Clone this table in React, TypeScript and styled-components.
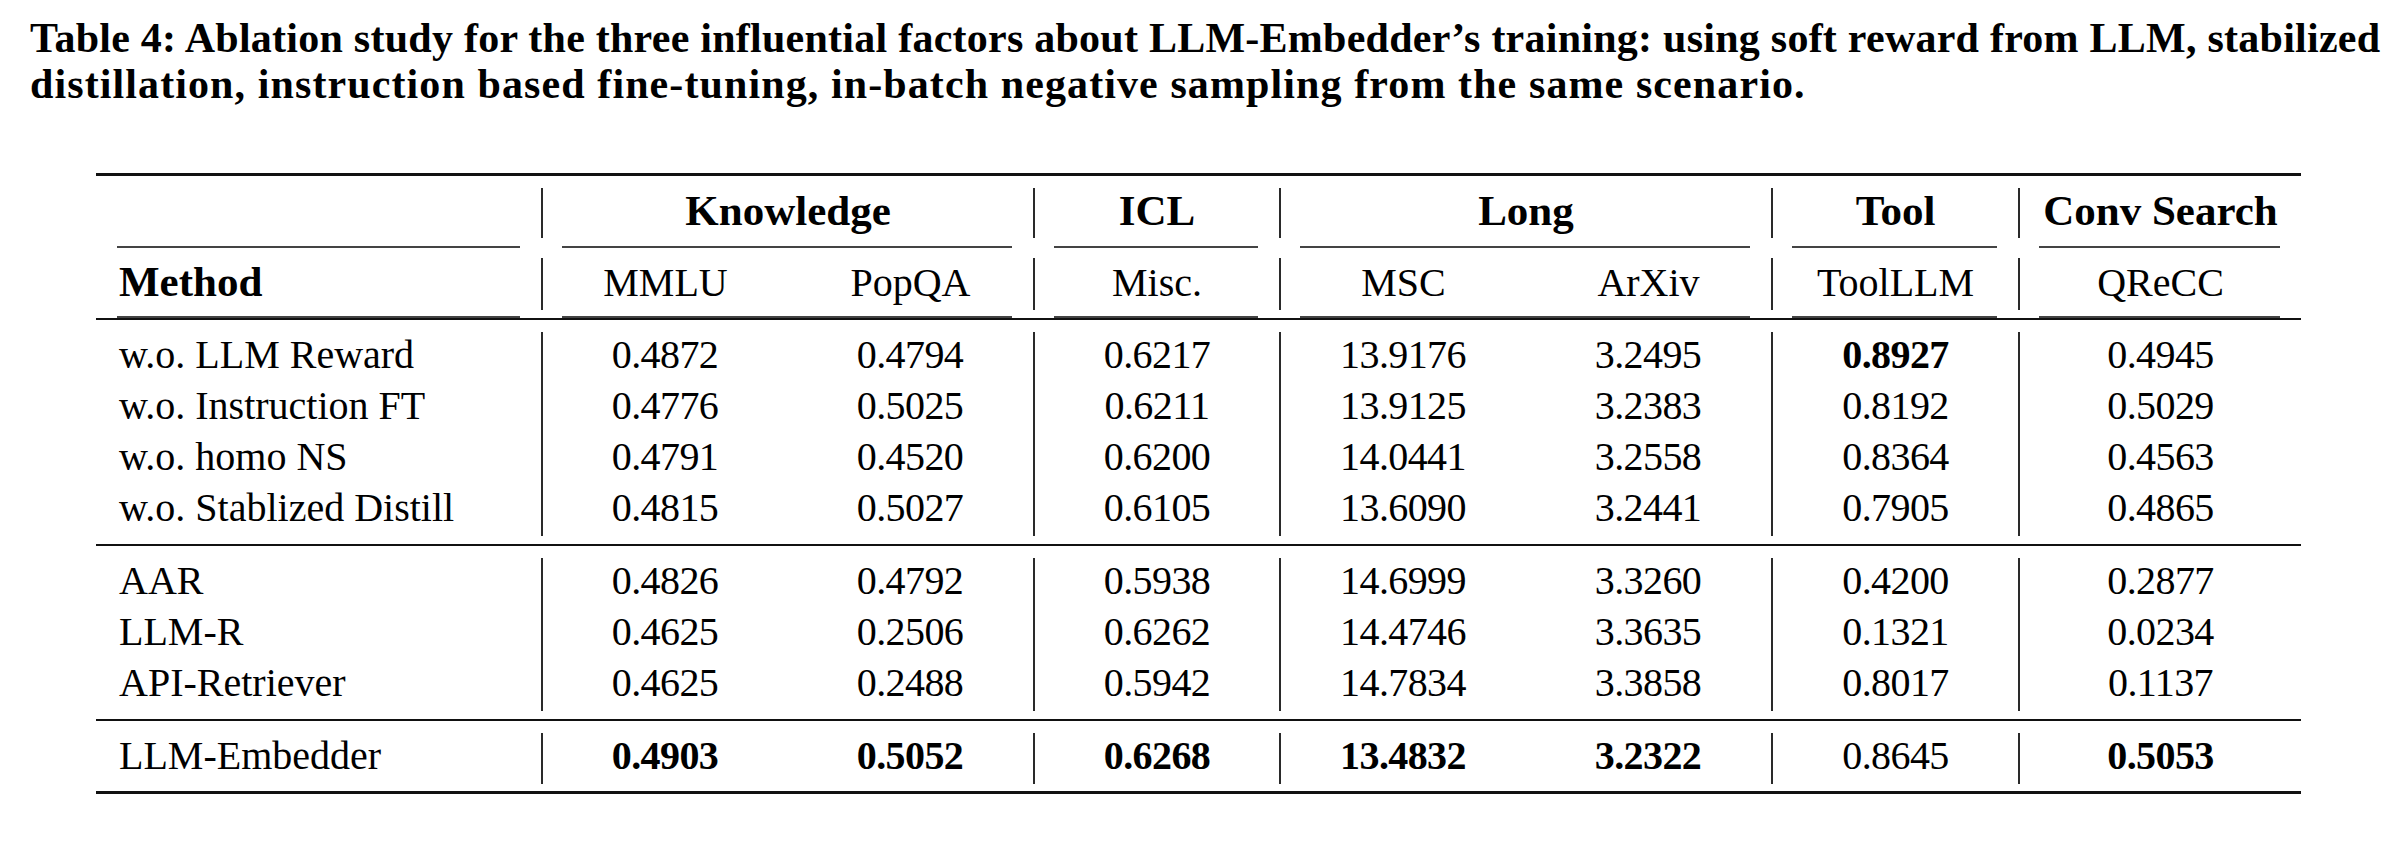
import { createGlobalStyle, styled } from "styled-components";

type Group = {
    title: string;
    subs: string[];
};

type Row = {
    method: string;
    values: string[];
    bold: number[];
};

const groups: Group[] = [
    { title: "Knowledge", subs: ["MMLU", "PopQA"] },
    { title: "ICL", subs: ["Misc."] },
    { title: "Long", subs: ["MSC", "ArXiv"] },
    { title: "Tool", subs: ["ToolLLM"] },
    { title: "Conv Search", subs: ["QReCC"] },
];

const blocks: Row[][] = [
    [
        { method: "w.o. LLM Reward", values: ["0.4872", "0.4794", "0.6217", "13.9176", "3.2495", "0.8927", "0.4945"], bold: [5] },
        { method: "w.o. Instruction FT", values: ["0.4776", "0.5025", "0.6211", "13.9125", "3.2383", "0.8192", "0.5029"], bold: [] },
        { method: "w.o. homo NS", values: ["0.4791", "0.4520", "0.6200", "14.0441", "3.2558", "0.8364", "0.4563"], bold: [] },
        { method: "w.o. Stablized Distill", values: ["0.4815", "0.5027", "0.6105", "13.6090", "3.2441", "0.7905", "0.4865"], bold: [] },
    ],
    [
        { method: "AAR", values: ["0.4826", "0.4792", "0.5938", "14.6999", "3.3260", "0.4200", "0.2877"], bold: [] },
        { method: "LLM-R", values: ["0.4625", "0.2506", "0.6262", "14.4746", "3.3635", "0.1321", "0.0234"], bold: [] },
        { method: "API-Retriever", values: ["0.4625", "0.2488", "0.5942", "14.7834", "3.3858", "0.8017", "0.1137"], bold: [] },
    ],
    [
        { method: "LLM-Embedder", values: ["0.4903", "0.5052", "0.6268", "13.4832", "3.2322", "0.8645", "0.5053"], bold: [0, 1, 2, 3, 4, 6] },
    ],
];

// value columns that start a new group get the vertical line
const sepCols = [0, 2, 3, 5, 6];

const App = () => {
    return (
        <>
            <GlobalStyle />
            <Caption>
                <CaptionLine $spacing={0.25}>
                    Table 4: Ablation study for the three influential factors about LLM-Embedder’s training: using soft reward from LLM, stabilized
                </CaptionLine>
                <CaptionLine $spacing={1.1}>
                    distillation, instruction based fine-tuning, in-batch negative sampling from the same scenario.
                </CaptionLine>
            </Caption>

            <Table>
                <HeadBand>
                    <GroupCell>
                        <TopLabel />
                        <CRule />
                    </GroupCell>
                    {groups.map((g) => (
                        <GroupCell key={g.title}>
                            <TopLabel $sep>{g.title}</TopLabel>
                            <CRule />
                        </GroupCell>
                    ))}
                </HeadBand>

                <HeadBand>
                    <GroupCell>
                        <SubLabel>
                            <MethodHead>Method</MethodHead>
                        </SubLabel>
                        <CRule $gap={6} />
                    </GroupCell>
                    {groups.map((g) => (
                        <GroupCell key={g.title}>
                            <SubLabel $sep>
                                {g.subs.map((s) => (
                                    <SubName key={s}>{s}</SubName>
                                ))}
                            </SubLabel>
                            <CRule $gap={6} />
                        </GroupCell>
                    ))}
                </HeadBand>

                {blocks.map((rows, bi) => (
                    <Block key={bi} $last={bi === blocks.length - 1}>
                        {rows.map((row) => (
                            <Line key={row.method}>
                                <MethodCell>{row.method}</MethodCell>
                                {row.values.map((v, i) => (
                                    <ValueCell
                                        key={i}
                                        $sep={sepCols.includes(i)}
                                        $bold={row.bold.includes(i)}
                                    >
                                        {v}
                                    </ValueCell>
                                ))}
                            </Line>
                        ))}
                    </Block>
                ))}
            </Table>
        </>
    );
};

const GlobalStyle = createGlobalStyle`
    * {
        box-sizing: border-box;
    }
    html, body {
        margin: 0;
        padding: 0;
        background: #ffffff;
        color: #000000;
        font-family: "Liberation Serif", "Times New Roman", serif;
    }
`;

const Caption = styled.div`
    padding: 15px 0 0 30px;
    font-size: 42px;
    font-weight: 700;
    line-height: 46px;
`;

const CaptionLine = styled.span<{ $spacing: number }>`
    display: block;
    white-space: nowrap;
    letter-spacing: ${(p) => p.$spacing}px;
`;

const Table = styled.div`
    width: 2205px;
    margin: 66px 0 0 96px;
    border-top: 3px solid #111;
    border-bottom: 3px solid #111;
`;

const HeadBand = styled.div`
    display: grid;
    grid-template-columns: 445px 492px 246px 492px 247px 283px;
`;

const GroupCell = styled.div`
    display: flex;
    flex-direction: column;
`;

const TopLabel = styled.div<{ $sep?: boolean }>`
    height: 50px;
    margin-top: 12px;
    padding-bottom: 5px;
    border-left: ${(p) => (p.$sep ? "2px solid #2a2a2a" : "none")};
    font-size: 43px;
    font-weight: 700;
    line-height: 45px;
    text-align: center;
    white-space: nowrap;
`;

const CRule = styled.div<{ $gap?: number }>`
    margin: ${(p) => p.$gap ?? 8}px 21px 0;
    border-top: 2px solid #444;
`;

const SubLabel = styled.div<{ $sep?: boolean }>`
    display: flex;
    height: 52px;
    margin-top: 10px;
    border-left: ${(p) => (p.$sep ? "2px solid #2a2a2a" : "none")};
`;

const MethodHead = styled.div`
    padding-left: 23px;
    font-size: 43px;
    font-weight: 700;
    line-height: 47px;
`;

const SubName = styled.div`
    flex: 1;
    font-size: 40px;
    line-height: 49px;
    text-align: center;
    white-space: nowrap;
`;

const Block = styled.div<{ $last: boolean }>`
    padding: 12px 0 ${(p) => (p.$last ? 7 : 8)}px;
    border-top: 2px solid #111;
`;

const Line = styled.div`
    display: grid;
    grid-template-columns: 445px 246px 246px 246px 246px 246px 247px 283px;
    height: 51px;
`;

const MethodCell = styled.div`
    padding-left: 23px;
    font-size: 40px;
    line-height: 45px;
    white-space: nowrap;
`;

const ValueCell = styled.div<{ $sep: boolean; $bold: boolean }>`
    border-left: ${(p) => (p.$sep ? "2px solid #2a2a2a" : "none")};
    font-size: 40px;
    font-weight: ${(p) => (p.$bold ? 700 : 400)};
    line-height: 45px;
    letter-spacing: -0.6px;
    text-align: center;
`;

export default App;
